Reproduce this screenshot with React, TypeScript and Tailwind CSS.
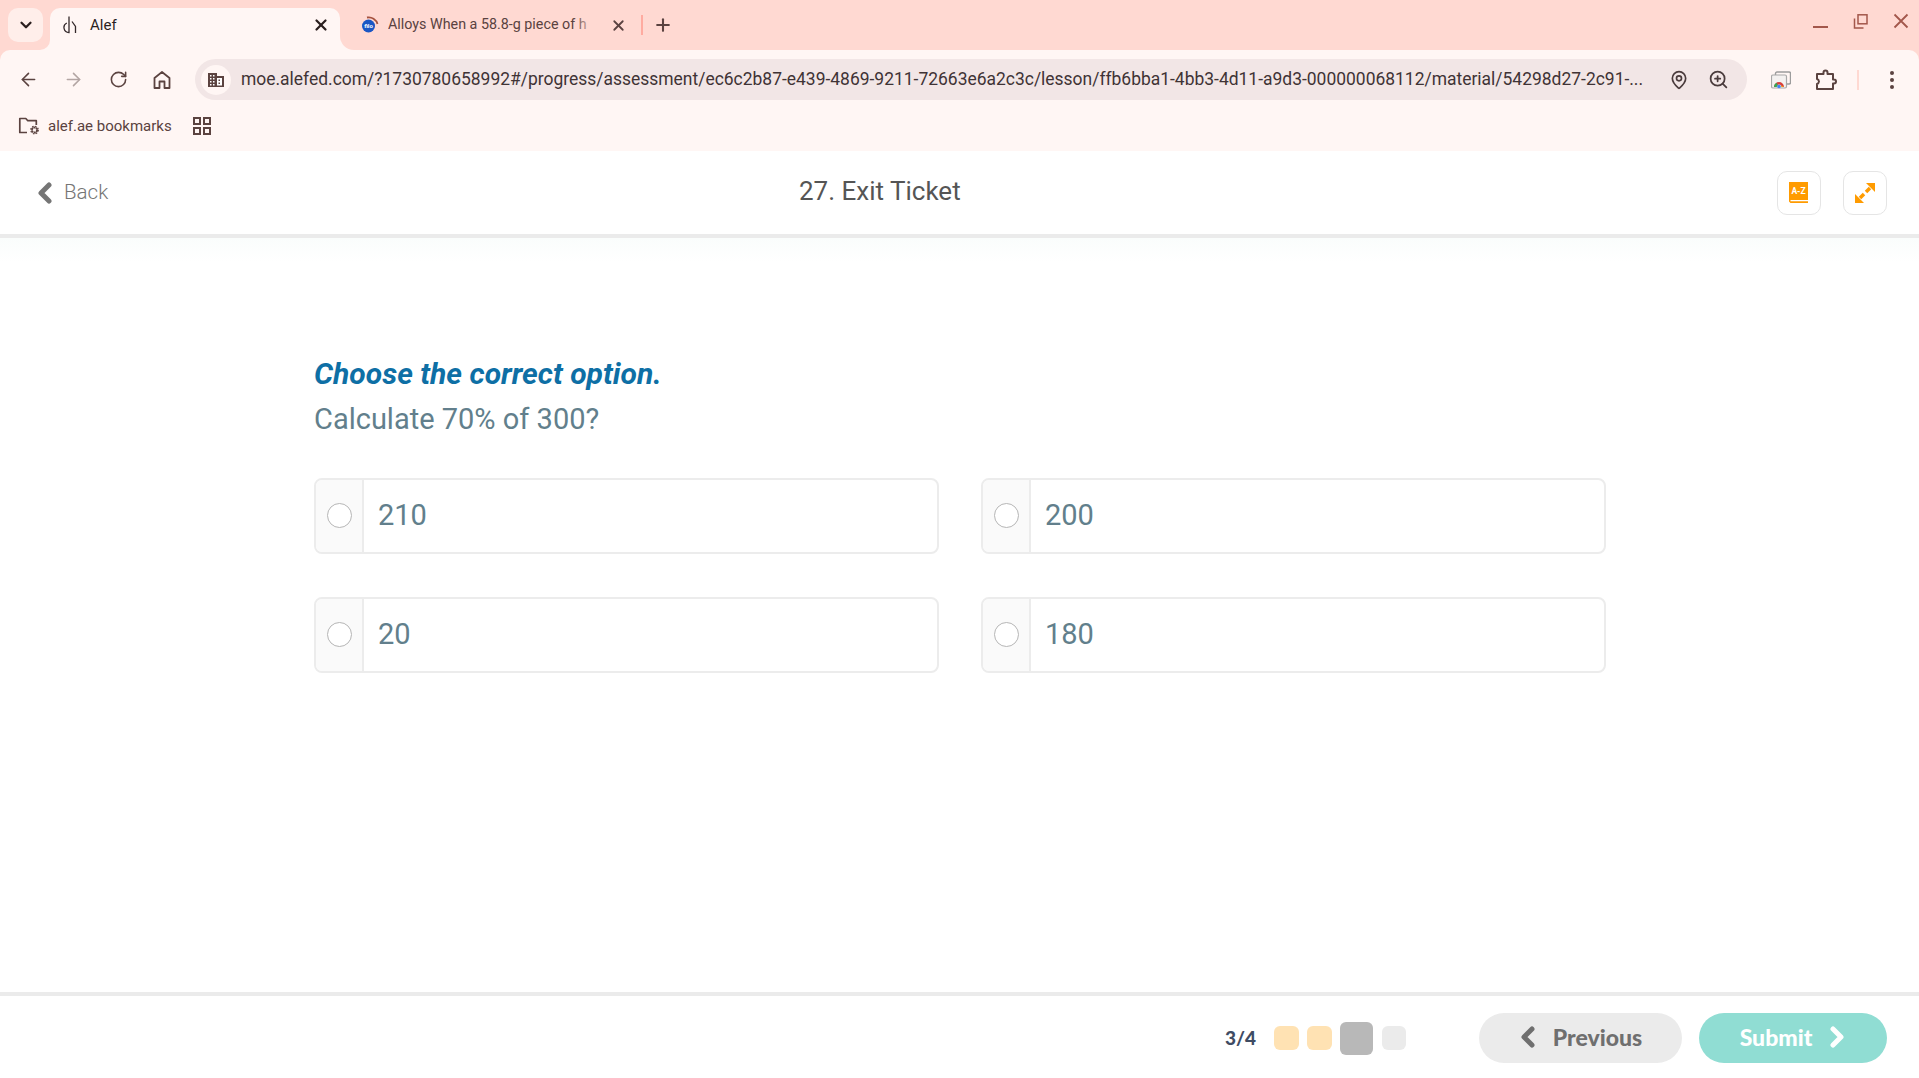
import { ArrowLeft, ArrowRight, RotateCw, MapPin, ZoomIn, X, Plus, ChevronDown } from "lucide-react";

const ui = "font-['Roboto',sans-serif]";
const page = "font-['Roboto','Noto_Sans',sans-serif]";

function Chevron({ dir, color }: { dir: "left" | "right"; color: string }) {
  return (
    <svg width="18" height="22" viewBox="0 0 18 22" fill="none">
      <polyline
        points={dir === "left" ? "13,3 5,11 13,19" : "5,3 13,11 5,19"}
        stroke={color}
        strokeWidth="5"
        strokeLinecap="round"
        strokeLinejoin="round"
      />
    </svg>
  );
}

function HomeIcon() {
  return (
    <svg width="20" height="20" viewBox="0 0 20 20" fill="none" stroke="#5b4340" strokeWidth="1.8" strokeLinejoin="round">
      <path d="M2.5 18V8L10 2l7.5 6v10h-5v-6.5h-5V18z" />
    </svg>
  );
}

function SiteIcon() {
  return (
    <svg width="16" height="14" viewBox="0 0 16 14" fill="#5b4340">
      <path d="M0 0h9v3h7v11H0z" />
      <g fill="#fff">
        <rect x="2" y="2" width="1.5" height="1.5" />
        <rect x="5" y="2" width="1.5" height="1.5" />
        <rect x="2" y="5" width="1.5" height="1.5" />
        <rect x="5" y="5" width="1.5" height="1.5" />
        <rect x="2" y="8" width="1.5" height="1.5" />
        <rect x="5" y="8" width="1.5" height="1.5" />
        <rect x="2" y="11" width="1.5" height="1.5" />
        <rect x="5" y="11" width="1.5" height="1.5" />
        <rect x="9" y="5" width="5" height="7.5" />
      </g>
      <rect x="10.5" y="6.5" width="1.5" height="1.5" />
      <rect x="10.5" y="9.5" width="1.5" height="1.5" />
    </svg>
  );
}

function CastIcon() {
  return (
    <svg width="20" height="18" viewBox="0 0 20 18" fill="none">
      <rect x="4.5" y="1" width="15" height="12" rx="1.5" stroke="#9c9c9c" strokeWidth="1.4" />
      <rect x="0.5" y="4" width="15" height="13" rx="1.5" fill="#f4f1f0" stroke="#a8a8a8" strokeWidth="1.2" />
      <path d="M3 16a5 5 0 0 1 10 0h-2.5a2.5 2.5 0 0 0-5 0z" fill="#d8403a" />
      <path d="M3 16a5 5 0 0 1 2.5-4.3L7 14.5A2.5 2.5 0 0 0 5.5 16z" fill="#34a853" />
      <path d="M10.5 16a2.5 2.5 0 0 0-.6-1.6L13 16z" fill="#fbbc04" />
      <circle cx="8" cy="15.5" r="1.8" fill="#4285f4" />
    </svg>
  );
}

function PuzzleIcon() {
  return (
    <svg width="22" height="22" viewBox="0 0 22 22" fill="none" stroke="#5b4340" strokeWidth="2" strokeLinejoin="round">
      <path d="M2 5h6.5V3.5a2 2 0 0 1 4 0V5H18v5.500h1a2 2 0 0 1 0 4h-1V20H2v-5a3 3 0 0 0 2-2.500A3 3 0 0 0 2 10z" />
    </svg>
  );
}

function Kebab() {
  return (
    <svg width="6" height="20" viewBox="0 0 6 20" fill="#5b4340">
      <circle cx="3" cy="3" r="2" />
      <circle cx="3" cy="10" r="2" />
      <circle cx="3" cy="17" r="2" />
    </svg>
  );
}

function FolderIcon() {
  return (
    <svg width="22" height="18" viewBox="0 0 22 18" fill="none">
      <path d="M9 15.500H1.800V1.500h6l2 2.200h8.500V8" stroke="#5b4340" strokeWidth="1.700" strokeLinejoin="round" />
      <circle cx="16.500" cy="13" r="2.600" stroke="#5b4340" strokeWidth="2" strokeDasharray="2.200 0.500" />
      <circle cx="16.500" cy="13" r="3.800" stroke="#5b4340" strokeWidth="1.200" strokeDasharray="1.500 1.500" />
    </svg>
  );
}

function AppsIcon() {
  return (
    <svg width="18" height="18" viewBox="0 0 18 18" fill="none" stroke="#5b4340" strokeWidth="2">
      <rect x="1" y="1" width="6" height="6" />
      <rect x="11" y="1" width="6" height="6" />
      <rect x="1" y="11" width="6" height="6" />
      <rect x="11" y="11" width="6" height="6" />
    </svg>
  );
}

function AlefIcon() {
  return (
    <svg width="14" height="18" viewBox="0 0 14 18" fill="none" stroke="#33282a" strokeWidth="1.300">
      <path d="M6 0.500V16.500A5 5 0 0 1 3.800 7" />
      <path d="M9 5.500L12.500 10.500V17" />
    </svg>
  );
}

function FiloIcon() {
  return (
    <svg width="18" height="18" viewBox="0 0 18 18" fill="none">
      <circle cx="7.500" cy="10" r="6.500" fill="#1a56c4" />
      <path d="M6 1.500A9 9 0 0 1 16.500 8" stroke="#a5523f" strokeWidth="1.800" />
      <text x="7.500" y="12" textAnchor="middle" fontSize="6" fontWeight="700" fill="#fff" fontFamily="Roboto, sans-serif">
        filo
      </text>
    </svg>
  );
}

function BookIcon() {
  return (
    <svg width="20" height="22" viewBox="0 0 20 22">
      <path d="M0 0h19v18H1.500v1.200H19V21H1.500L0 19.500z" fill="#ff9b00" />
      <text x="9.500" y="12" textAnchor="middle" fontSize="8.500" fontWeight="700" fill="#fff" fontFamily="Roboto, sans-serif">
        A-Z
      </text>
    </svg>
  );
}

function ExpandIcon() {
  return (
    <svg width="22" height="22" viewBox="0 0 22 22" fill="#ff9b00">
      <path d="M12 1h9v9z" />
      <path d="M1 21v-9l9 9z" />
      <path d="M6 16l4-4M12 10l4-4" stroke="#ff9b00" strokeWidth="3.500" fill="none" />
    </svg>
  );
}

function Flare({ side }: { side: "left" | "right" }) {
  const outer = side === "left" ? "-left-[10px] h-[10px] w-[10px]" : "-right-[14px] h-[14px] w-[14px]";
  const inner = side === "left" ? "rounded-br-[10px]" : "rounded-bl-[14px]";
  return (
    <div className={`absolute bottom-0 bg-[#fff6f4] ${outer}`}>
      <div className={`h-full w-full bg-[#ffd9d2] ${inner}`} />
    </div>
  );
}

function Option({ value }: { value: string }) {
  return (
    <div className="flex h-[76px] overflow-hidden rounded-lg border-2 border-[#ececec] bg-white">
      <div className="flex w-[48px] shrink-0 items-center justify-center border-r-2 border-[#ececec] bg-[#fafafa]">
        <div className="mb-[2px] h-[25px] w-[25px] rounded-full border border-[#b5b5b5] bg-white" />
      </div>
      <div className="flex items-center pl-[14px] text-[29px] text-[#627f8c]">{value}</div>
    </div>
  );
}

function Square({ cls }: { cls: string }) {
  return <div className={`rounded-md ${cls}`} />;
}

export default function App() {
  return (
    <div className={`flex h-[1078px] w-[1919px] flex-col overflow-hidden bg-white ${page}`}>
      {/* tab strip */}
      <div className={`flex h-[50px] shrink-0 items-end bg-[#ffd9d2] pl-[8px] ${ui}`}>
        <div className="mb-[8px] flex h-[34px] w-[35px] items-center justify-center rounded-[10px] bg-[#ffeeea]">
          <ChevronDown size={18} strokeWidth={3} color="#2b1f1f" />
        </div>
        <div className="relative ml-[7px] flex h-[42px] w-[290px] items-center rounded-t-[10px] bg-[#fff6f4] pb-[8px] pl-[13px] pr-[10px]">
          <Flare side="left" />
          <Flare side="right" />
          <AlefIcon />
          <span className="ml-[13px] flex-1 text-[15px] text-[#2b1f1f]">Alef</span>
          <X size={18} strokeWidth={3} color="#2b1f1f" />
        </div>
        <div className="flex h-[42px] shrink-0 items-center pb-[8px] pl-[21px]">
          <FiloIcon />
          <div className="relative ml-[9px] w-[209px] shrink-0 overflow-hidden whitespace-nowrap text-[14.300px] text-[#5a4240]">
            Alloys When a 58.8-g piece of h
            <div className="absolute inset-y-0 right-0 w-[24px] bg-gradient-to-r from-transparent to-[#ffd9d2]" />
          </div>
          <div className="ml-[13px]">
            <X size={17} strokeWidth={2.500} color="#5a4240" />
          </div>
          <div className="ml-[14px] h-[20px] w-[2px] bg-[#ffaba0]" />
          <div className="ml-[10px]">
            <Plus size={20} strokeWidth={2.500} color="#5a4240" />
          </div>
        </div>
        <div className="flex h-[42px] flex-1 items-start justify-end pt-[5px]">
          <div className="flex w-[106px] items-center justify-between pr-[10px]">
            <div className="mt-[11px] h-[2px] w-[15px] bg-[#a3574b]" />
            <svg width="15" height="15" viewBox="0 0 15 15" fill="none" stroke="#a3574b" strokeWidth="1.500">
              <rect x="5" y="0.800" width="9" height="9" />
              <path d="M1.500 4.500v9.500h9" />
            </svg>
            <svg width="16" height="16" viewBox="0 0 16 16" fill="none" stroke="#a3574b" strokeWidth="1.800">
              <path d="M1.500 1.500l13 13M14.500 1.500l-13 13" />
            </svg>
          </div>
        </div>
      </div>

      {/* toolbar */}
      <div className={`h-[101px] shrink-0 bg-[#ffd9d2] ${ui}`}>
        <div className="h-full rounded-t-[10px] bg-[#fff6f4]">
          <div className="flex h-[51px] items-center pt-[8px]">
            <div className="ml-[18px] flex w-[177px] items-center justify-between pr-[23px]">
              <ArrowLeft size={21} strokeWidth={1.800} color="#5b4340" />
              <ArrowRight size={21} strokeWidth={1.800} color="#b3a5a3" />
              <RotateCw size={19} strokeWidth={2} color="#5b4340" />
              <HomeIcon />
            </div>
            <div className="flex h-[41px] w-[1552px] items-center rounded-full bg-[#f2e6e6] pl-[6px] pr-[18px]">
              <div className="flex h-[30px] w-[30px] shrink-0 items-center justify-center rounded-full bg-[#fff6f4]">
                <SiteIcon />
              </div>
              <div className="mb-[1px] ml-[10px] flex-1 whitespace-nowrap text-[17.470px] text-[#3f3335]">
                moe.alefed.com/?1730780658992#/progress/assessment/ec6c2b87-e439-4869-9211-72663e6a2c3c/lesson/ffb6bba1-4bb3-4d11-a9d3-000000068112/material/54298d27-2c91-...
              </div>
              <div className="flex w-[60px] shrink-0 items-center justify-between">
                <MapPin size={20} strokeWidth={2} color="#4a3b3c" />
                <ZoomIn size={21} strokeWidth={2} color="#4a3b3c" />
              </div>
            </div>
            <div className="ml-[24px] flex items-center">
              <CastIcon />
              <div className="ml-[24px]">
                <PuzzleIcon />
              </div>
              <div className="ml-[20px] h-[20px] w-[2px] bg-[#ffd9d2]" />
              <div className="ml-[30px]">
                <Kebab />
              </div>
            </div>
          </div>
          <div className="flex h-[50px] items-center pl-[18px]">
            <FolderIcon />
            <span className="ml-[8px] text-[15px] text-[#5a4240]">alef.ae bookmarks</span>
            <div className="ml-[21px]">
              <AppsIcon />
            </div>
          </div>
        </div>
      </div>

      {/* page header */}
      <div className="flex h-[83px] shrink-0 items-center bg-white pl-[36px] pr-[32px]">
        <div className="flex w-[840px] items-center">
          <Chevron dir="left" color="#757575" />
          <span className="ml-[10px] text-[20.500px] font-light text-[#757575]">Back</span>
        </div>
        <div className="-ml-[77px] mb-[2px] w-[170px] whitespace-nowrap text-[26px] text-[#555555]">27. Exit Ticket</div>
        <div className="ml-auto flex gap-[22px]">
          <div className="flex h-[44px] w-[44px] items-center justify-center rounded-[10px] border-[1.500px] border-[#e5e5e5]">
            <BookIcon />
          </div>
          <div className="flex h-[44px] w-[44px] items-center justify-center rounded-[10px] border-[1.500px] border-[#e5e5e5]">
            <ExpandIcon />
          </div>
        </div>
      </div>
      <div className="h-[4px] shrink-0 bg-[#ebebeb]" />

      {/* question */}
      <div className="flex flex-1 flex-col bg-gradient-to-b from-[#fafdfc] to-white to-[24px] pl-[314px] pt-[115px]">
        <div className="text-[30px] font-bold italic leading-[42px] text-[#0e6fa5]">Choose the correct option.</div>
        <div className="mt-[2px] text-[29px] leading-[44px] text-[#627f8c]">Calculate 70% of 300?</div>
        <div className="mt-[37px] grid w-[1292px] grid-cols-2 gap-x-[42px] gap-y-[43px]">
          <Option value="210" />
          <Option value="200" />
          <Option value="20" />
          <Option value="180" />
        </div>
      </div>
      <div className="h-[4px] shrink-0 bg-[#ebebeb]" />

      {/* footer */}
      <div className="flex h-[82px] shrink-0 items-center justify-end pr-[32px] pt-[2px]">
        <span className="font-['Lato',sans-serif] text-[19px] font-black text-[#3f4c63]">3/4</span>
        <div className="ml-[18px] flex items-center gap-[8px]">
          <Square cls="h-[24px] w-[25px] bg-[#ffe2b3]" />
          <Square cls="h-[24px] w-[25px] bg-[#ffe2b3]" />
          <Square cls="h-[33px] w-[33px] bg-[#b8b8b8]" />
          <Square cls="ml-[1px] h-[24px] w-[24px] bg-[#ebebeb]" />
        </div>
        <div className="ml-[73px] flex h-[50px] w-[203px] items-center justify-center gap-[16px] rounded-full bg-[#ebebeb] pb-[2px] font-['Lato',sans-serif] text-[23px] font-black text-[#6f6f6f]">
          <Chevron dir="left" color="#6f6f6f" />
          Previous
        </div>
        <div className="ml-[17px] flex h-[50px] w-[188px] items-center justify-center gap-[16px] rounded-full bg-[#90ddd3] pb-[2px] font-['Lato',sans-serif] text-[23px] font-black text-white">
          Submit
          <Chevron dir="right" color="#ffffff" />
        </div>
      </div>
    </div>
  );
}
